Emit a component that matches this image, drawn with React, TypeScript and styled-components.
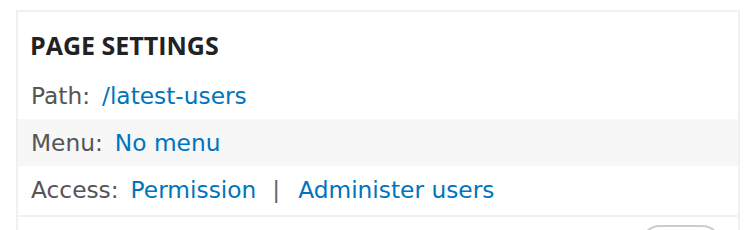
import styled, { createGlobalStyle } from "styled-components";

const GlobalStyle = createGlobalStyle`
  body {
    margin: 0;
    background: #fff;
    font-family: "DejaVu Sans", "Open Sans", sans-serif;
  }
`;

const Panel = styled.div`
  margin: 10px 0 0 16px;
  width: 724px;
  height: 240px;
  box-sizing: border-box;
  border: 2px solid #f0f0f0;
  border-bottom: none;
`;

const Title = styled.h2`
  margin: 0;
  padding: 16px 12px 0;
  height: 60px;
  box-sizing: border-box;
  font-family: "Open Sans", sans-serif;
  font-size: 25px;
  font-weight: 700;
  color: #222;
  text-transform: uppercase;
`;

const Row = styled.div<{ $shaded?: boolean }>`
  display: flex;
  align-items: center;
  height: 47px;
  padding: 0 13px;
  background: ${(p) => (p.$shaded ? "#f7f7f7" : "transparent")};
  font-size: 23.3px;
`;

const Label = styled.span`
  color: #555;
  margin-right: 12px;
`;

const Link = styled.a`
  color: #0074bd;
  text-decoration: none;
`;

const Sep = styled.span`
  color: #666;
  margin: 0 18px 0 16px;
`;

const Footer = styled.div`
  border-top: 2px solid #f0f0f0;
  margin-top: 2px;
  display: flex;
  justify-content: flex-end;
  padding: 8px 16px 0 0;
`;

const Button = styled.button`
  width: 82px;
  height: 40px;
  border: 2px solid #ccc;
  border-radius: 20px;
  background: #fff;
`;

const rows = [
  { label: "Path:", links: ["/latest-users"] },
  { label: "Menu:", links: ["No menu"], shaded: true },
  { label: "Access:", links: ["Permission", "Administer users"] },
];

export default function App() {
  return (
    <>
      <GlobalStyle />
      <Panel>
        <Title>Page settings</Title>
        {rows.map((r) => (
          <Row key={r.label} $shaded={r.shaded}>
            <Label>{r.label}</Label>
            {r.links.map((l, i) => (
              <span key={l}>
                {i > 0 && <Sep>|</Sep>}
                <Link href="#">{l}</Link>
              </span>
            ))}
          </Row>
        ))}
        <Footer>
          <Button />
        </Footer>
      </Panel>
    </>
  );
}
